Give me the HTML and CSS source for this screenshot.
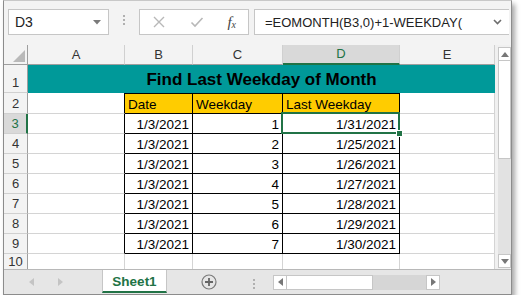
FILE: index.html
```
<!DOCTYPE html>
<html>
<head>
  <title>Find Last Weekday of Month</title>
  <link rel="stylesheet" href="styles.css">
</head>
<body>
  <div class="window">
    <div class="formula-bar">
      <div class="name-box">
        <span>D3</span>
        <svg class="drop" width="8" height="5" viewBox="0 0 8 5"><path d="M0 0h8L4 4.5z" fill="#7a7a7a"/></svg>
      </div>
      <div class="grip"><i></i><i></i><i></i></div>
      <div class="fx-box">
        <svg width="14" height="14" viewBox="0 0 14 14"><path d="M2 2l10 10M12 2L2 12" stroke="#b8b8b8" stroke-width="1.4" fill="none"/></svg>
        <svg width="14" height="14" viewBox="0 0 14 14"><path d="M1.5 7.5l3.5 3.5 7.5-8" stroke="#b8b8b8" stroke-width="1.6" fill="none"/></svg>
        <span class="fx">f<sub>x</sub></span>
      </div>
      <div class="formula-input">
        <span>=EOMONTH(B3,0)+1-WEEKDAY(</span>
        <svg width="9" height="6" viewBox="0 0 9 6"><path d="M1 1l3.5 3.5L8 1" stroke="#6d6d6d" stroke-width="1.6" fill="none"/></svg>
      </div>
    </div>

    <div class="sheet">
      <div class="grid">
        <div class="hdr corner"><svg width="12" height="12" viewBox="0 0 12 12"><path d="M12 0v12H0z" fill="#b9b9b9"/></svg></div>
        <div class="hdr col">A</div>
        <div class="hdr col">B</div>
        <div class="hdr col">C</div>
        <div class="hdr col active">D</div>
        <div class="hdr col">E</div>

        <div class="hdr row">1</div>
        <div class="title">Find Last Weekday of Month</div>

        <div class="hdr row">2</div>
        <div class="cell edge"></div>
        <div class="cell th">Date</div>
        <div class="cell th">Weekday</div>
        <div class="cell th">Last Weekday</div>
        <div class="cell"></div>

        <div class="hdr row active">3</div>
        <div class="cell edge"></div>
        <div class="cell td">1/3/2021</div>
        <div class="cell td">1</div>
        <div class="cell td selected">1/31/2021</div>
        <div class="cell"></div>

        <div class="hdr row">4</div>
        <div class="cell edge"></div>
        <div class="cell td">1/3/2021</div>
        <div class="cell td">2</div>
        <div class="cell td">1/25/2021</div>
        <div class="cell"></div>

        <div class="hdr row">5</div>
        <div class="cell edge"></div>
        <div class="cell td">1/3/2021</div>
        <div class="cell td">3</div>
        <div class="cell td">1/26/2021</div>
        <div class="cell"></div>

        <div class="hdr row">6</div>
        <div class="cell edge"></div>
        <div class="cell td">1/3/2021</div>
        <div class="cell td">4</div>
        <div class="cell td">1/27/2021</div>
        <div class="cell"></div>

        <div class="hdr row">7</div>
        <div class="cell edge"></div>
        <div class="cell td">1/3/2021</div>
        <div class="cell td">5</div>
        <div class="cell td">1/28/2021</div>
        <div class="cell"></div>

        <div class="hdr row">8</div>
        <div class="cell edge"></div>
        <div class="cell td">1/3/2021</div>
        <div class="cell td">6</div>
        <div class="cell td">1/29/2021</div>
        <div class="cell"></div>

        <div class="hdr row">9</div>
        <div class="cell edge"></div>
        <div class="cell td">1/3/2021</div>
        <div class="cell td">7</div>
        <div class="cell td">1/30/2021</div>
        <div class="cell"></div>

        <div class="hdr row">10</div>
        <div class="cell"></div>
        <div class="cell"></div>
        <div class="cell"></div>
        <div class="cell"></div>
        <div class="cell"></div>
      </div>

      <div class="vscroll">
        <div class="sb-btn"><svg width="8" height="5" viewBox="0 0 8 5"><path d="M0 5h8L4 0z" fill="#777"/></svg></div>
        <div class="sb-thumb"></div>
        <div class="sb-track"></div>
        <div class="sb-btn"><svg width="8" height="5" viewBox="0 0 8 5"><path d="M0 0h8L4 5z" fill="#777"/></svg></div>
      </div>
    </div>

    <div class="tabbar">
      <div class="nav">
        <svg width="5" height="8" viewBox="0 0 5 8"><path d="M5 0v8L0 4z" fill="#c4c4c4"/></svg>
        <svg width="5" height="8" viewBox="0 0 5 8"><path d="M0 0v8l5-4z" fill="#c4c4c4"/></svg>
      </div>
      <div class="tab">Sheet1</div>
      <div class="add">
        <svg width="16" height="16" viewBox="0 0 16 16"><circle cx="8" cy="8" r="7" stroke="#7a7a7a" stroke-width="1.2" fill="none"/><path d="M8 4v8M4 8h8" stroke="#666" stroke-width="1.8"/></svg>
      </div>
      <div class="grip small"><i></i><i></i><i></i></div>
      <div class="hscroll">
        <div class="sb-btn"><svg width="5" height="8" viewBox="0 0 5 8"><path d="M5 0v8L0 4z" fill="#777"/></svg></div>
        <div class="sb-thumb"></div>
        <div class="sb-track"></div>
        <div class="sb-btn"><svg width="5" height="8" viewBox="0 0 5 8"><path d="M0 0v8l5-4z" fill="#777"/></svg></div>
      </div>
    </div>
  </div>
</body>
</html>
```

FILE: styles.css
```
body {
  margin: 0;
  background: #fff;
  font-family: 'Liberation Sans', Arial, sans-serif;
}
.window {
  margin-left: 3px;
  width: 509px;
  height: 295px;
  box-sizing: border-box;
  border: 1px solid #8c8c8c;
  border-top-color: #c8c8c8;
  background: #f3f3f3;
  box-shadow: 3px 4px 5px rgba(0,0,0,0.35);
  display: flex;
  flex-direction: column;
  overflow: hidden;
}

/* formula bar */
.formula-bar {
  height: 44px;
  flex: none;
  display: flex;
  align-items: flex-start;
  padding: 8px 0 0 4px;
  box-sizing: border-box;
}
.name-box, .fx-box, .formula-input {
  height: 26px;
  box-sizing: border-box;
  background: #fff;
  border: 1px solid #c6c6c6;
  display: flex;
  align-items: center;
}
.name-box {
  width: 101px;
  padding: 0 7px 0 6px;
  justify-content: space-between;
  font-size: 14px;
  color: #222;
}
.grip {
  width: 30px;
  display: flex;
  flex-direction: column;
  align-items: center;
  gap: 2px;
  padding-top: 6px;
}
.grip i {
  width: 2px;
  height: 2px;
  background: #b0b0b0;
}
.fx-box {
  width: 110px;
  padding: 0 12px 0 12px;
  justify-content: space-between;
}
.fx {
  font-family: 'Liberation Serif', serif;
  font-style: italic;
  font-size: 15px;
  color: #444;
}
.fx sub {
  font-size: 10px;
  vertical-align: -1px;
}
.formula-input {
  width: 255px;
  margin-left: 5px;
  padding: 0 7px 0 10px;
  justify-content: space-between;
  font-size: 13px;
  color: #222;
  border-right: none;
}

/* grid */
.sheet {
  height: 224px;
  flex: none;
  display: flex;
}
.grid {
  display: grid;
  grid-template-columns: 24px 97px 68px 90px 117px 95px;
  grid-template-rows: 20px 28px 21px repeat(7, 20px) 1fr;
  background: #fff;
  overflow: hidden;
  font-size: 13.5px;
}
.grid > div {
  box-sizing: border-box;
  border-right: 1px solid #d4d4d4;
  border-bottom: 1px solid #d4d4d4;
  display: flex;
  align-items: flex-end;
  padding: 0 3px 1px 3px;
  white-space: nowrap;
  color: #000;
}
.grid > .hdr {
  background: #f3f3f3;
  color: #333;
  font-size: 13px;
  justify-content: center;
  padding: 0 0 2px 0;
}
.grid > .hdr.col {
  border-bottom-color: #9e9e9e;
  border-right-color: #d0d0d0;
}
.grid > .hdr.row {
  border-right-color: #9e9e9e;
  border-bottom-color: #d0d0d0;
}
.grid > .hdr.corner {
  border-right-color: #9e9e9e;
  border-bottom-color: #9e9e9e;
  justify-content: flex-end;
  padding: 0 2px 2px 0;
}
.grid > .hdr.active {
  background: #d9d9d9;
  color: #217346;
}
.grid > .hdr.col.active {
  border-bottom: 2px solid #217346;
}
.grid > .hdr.row.active {
  border-right: 2px solid #217346;
}
.grid > .title {
  grid-column: 2 / span 5;
  background: #009999;
  border-right: none;
  border-bottom: none;
  justify-content: center;
  font-size: 17px;
  font-weight: bold;
  padding-bottom: 3px;
}
.grid > .cell.edge {
  border-right-color: #000;
}
.grid > .th {
  background: #ffcc00;
}
.grid > .th, .grid > .td {
  border-right-color: #000;
  border-bottom-color: #000;
}
.grid > .th {
  border-top: 1px solid #000;
}
.grid > .td {
  justify-content: flex-end;
}
.grid > .selected {
  position: relative;
}
.selected::before {
  content: '';
  position: absolute;
  left: -2px;
  top: -2px;
  right: -1px;
  bottom: -1px;
  border: 2px solid #217346;
}
.selected::after {
  content: '';
  position: absolute;
  right: -4px;
  bottom: -4px;
  width: 5px;
  height: 5px;
  background: #217346;
  border: 1px solid #fff;
}

/* scrollbars */
.vscroll {
  width: 16px;
  display: flex;
  flex-direction: column;
  padding: 2px 0 1px 3px;
  box-sizing: border-box;
  background: #f0f0f0;
}
.sb-btn {
  flex: none;
  background: #fff;
  border: 1px solid #c6c6c6;
  box-sizing: border-box;
  display: flex;
  align-items: center;
  justify-content: center;
}
.vscroll .sb-btn {
  height: 14px;
}
.vscroll .sb-thumb {
  height: 97px;
  background: #fff;
  border: 1px solid #c6c6c6;
  border-top: none;
}
.vscroll .sb-track {
  flex: 1;
  background: #e2e2e2;
}

/* sheet tabs */
.tabbar {
  flex: 1;
  display: flex;
  align-items: stretch;
  border-top: 1px solid #b8b8b8;
  background: #e6e6e6;
}
.nav {
  width: 98px;
  display: flex;
  align-items: center;
  gap: 24px;
  padding-left: 25px;
  box-sizing: border-box;
}
.tab {
  width: 65px;
  box-sizing: border-box;
  background: #fff;
  border-left: 1px solid #c6c6c6;
  border-right: 1px solid #c6c6c6;
  border-bottom: 2px solid #217346;
  margin-bottom: 1px;
  display: flex;
  align-items: center;
  justify-content: center;
  color: #217346;
  font-weight: bold;
  font-size: 13.5px;
  padding-top: 1px;
}
.add {
  width: 84px;
  display: flex;
  align-items: center;
  justify-content: center;
}
.grip.small {
  width: 6px;
  padding-top: 9px;
}
.hscroll {
  display: flex;
  align-items: center;
  margin-left: 16px;
  height: 15px;
  align-self: center;
}
.hscroll .sb-btn {
  width: 14px;
  height: 15px;
}
.hscroll .sb-thumb {
  width: 86px;
  height: 15px;
  box-sizing: border-box;
  background: #fff;
  border: 1px solid #c6c6c6;
  border-left: none;
}
.hscroll .sb-track {
  width: 53px;
  height: 15px;
  background: #d6d6d6;
}
```
